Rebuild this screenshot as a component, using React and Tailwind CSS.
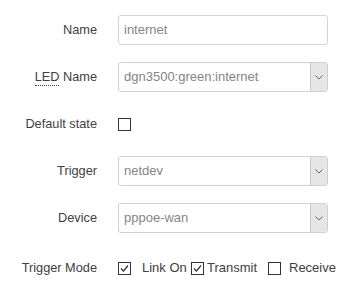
import React from "react";

const font = { fontFamily: '"Liberation Sans", Arial, sans-serif' };

function Row({ label, children, className = "" }) {
  return (
    <div className={`flex items-center h-[30px] ${className}`}>
      <div className="w-[97px] text-right text-[12.75px] text-[#404040] shrink-0">
        {label}
      </div>
      <div className="ml-[21px] flex items-center">{children}</div>
    </div>
  );
}

function TextBox({ value }) {
  return (
    <div className="w-[210px] h-[30px] border border-[#d4d4d4] rounded-[3px] bg-white flex items-center px-[5px] text-[13px] text-[#858585]">
      {value}
    </div>
  );
}

function SelectBox({ value }) {
  return (
    <div className="w-[210px] h-[30px] border border-[#cfcfcf] rounded-[3px] bg-white flex items-stretch text-[13px] text-[#858585] overflow-hidden">
      <div className="flex-1 flex items-center px-[5px]">{value}</div>
      <div className="w-[17px] bg-[#e6e6e6] border-l border-[#c8c8c8] flex items-center justify-center">
        <svg width="8" height="5" viewBox="0 0 8 5">
          <path d="M0.5 0.5 L4 4 L7.5 0.5" fill="none" stroke="#666" strokeWidth="1" />
        </svg>
      </div>
    </div>
  );
}

function Check({ checked }) {
  return (
    <div className="w-[13px] h-[13px] border border-[#333] bg-white flex items-center justify-center shrink-0">
      {checked && (
        <svg width="11" height="11" viewBox="0 0 11 11">
          <path d="M2 5.5 L4.5 8 L9 2.5" fill="none" stroke="#333" strokeWidth="1.2" />
        </svg>
      )}
    </div>
  );
}

export default function App() {
  return (
    <div className="w-[355px] h-[287px] bg-white pt-[15px]" style={font}>
      <div className="flex flex-col gap-[17px]">
        <Row label="Name">
          <TextBox value="internet" />
        </Row>
        <Row
          label={
            <span>
              <span className="border-b border-dotted border-[#404040] pb-[1px]">LED</span> Name
            </span>
          }
        >
          <SelectBox value="dgn3500:green:internet" />
        </Row>
        <Row label="Default state">
          <Check />
        </Row>
        <Row label="Trigger">
          <SelectBox value="netdev" />
        </Row>
        <Row label="Device">
          <SelectBox value="pppoe-wan" />
        </Row>
        <Row label="Trigger Mode" className="mt-[3px]">
          <div className="flex items-center text-[13px] text-[#404040]">
            <Check checked />
            <span className="ml-[11px] w-[49px]">Link On</span>
            <Check checked />
            <span className="ml-[3px] w-[61px]">Transmit</span>
            <Check />
            <span className="ml-[8px]">Receive</span>
          </div>
        </Row>
      </div>
    </div>
  );
}
